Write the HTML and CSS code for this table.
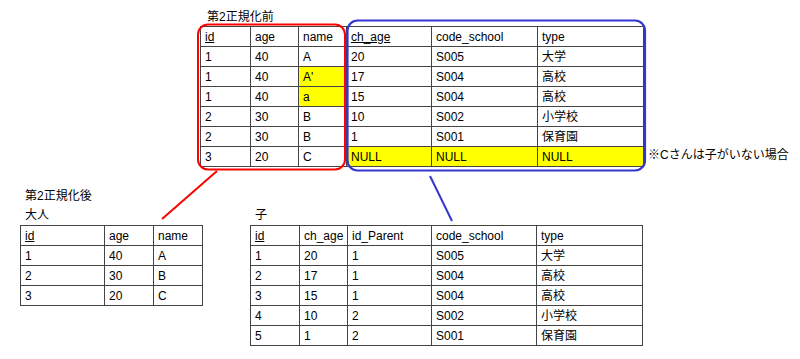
FILE: index.html
```html
<!DOCTYPE html>
<html lang="ja">
<head>
<meta charset="utf-8">
<title>第2正規化</title>
<link rel="stylesheet" href="styles.css">
</head>
<body>
<div class="page">
  <section class="before">
    <div class="caption">第2正規化前</div>
    <div class="before-row">
      <table class="t">
        <colgroup>
          <col class="c50"><col class="c48"><col class="c48"><col class="c85"><col class="c106"><col class="c106">
        </colgroup>
        <tr><td><u>id</u></td><td>age</td><td>name</td><td><u>ch_age</u></td><td>code_school</td><td>type</td></tr>
        <tr><td>1</td><td>40</td><td>A</td><td>20</td><td>S005</td><td>大学</td></tr>
        <tr><td>1</td><td>40</td><td class="hl">A'</td><td>17</td><td>S004</td><td>高校</td></tr>
        <tr><td>1</td><td>40</td><td class="hl">a</td><td>15</td><td>S004</td><td>高校</td></tr>
        <tr><td>2</td><td>30</td><td>B</td><td>10</td><td>S002</td><td>小学校</td></tr>
        <tr><td>2</td><td>30</td><td>B</td><td>1</td><td>S001</td><td>保育園</td></tr>
        <tr><td>3</td><td>20</td><td>C</td><td class="hl">NULL</td><td class="hl">NULL</td><td class="hl">NULL</td></tr>
      </table>
      <p class="note">※Cさんは子がいない場合</p>
    </div>
  </section>

  <section class="after">
    <div class="cap cap-left">
      <div class="cap-line">第2正規化後</div>
      <div class="cap-line">大人</div>
    </div>
    <div class="cap cap-right">
      <div class="cap-line">子</div>
    </div>
    <table class="t">
      <colgroup><col class="c84"><col class="c49"><col class="c49"></colgroup>
      <tr><td><u>id</u></td><td>age</td><td>name</td></tr>
      <tr><td>1</td><td>40</td><td>A</td></tr>
      <tr><td>2</td><td>30</td><td>B</td></tr>
      <tr><td>3</td><td>20</td><td>C</td></tr>
    </table>
    <table class="t">
      <colgroup><col class="c49"><col class="c48"><col class="c84"><col class="c105"><col class="c106"></colgroup>
      <tr><td><u>id</u></td><td>ch_age</td><td>id_Parent</td><td>code_school</td><td>type</td></tr>
      <tr><td>1</td><td>20</td><td>1</td><td>S005</td><td>大学</td></tr>
      <tr><td>2</td><td>17</td><td>1</td><td>S004</td><td>高校</td></tr>
      <tr><td>3</td><td>15</td><td>1</td><td>S004</td><td>高校</td></tr>
      <tr><td>4</td><td>10</td><td>2</td><td>S002</td><td>小学校</td></tr>
      <tr><td>5</td><td>1</td><td>2</td><td>S001</td><td>保育園</td></tr>
    </table>
  </section>

  <svg class="overlay" width="800" height="359" viewBox="0 0 800 359" aria-hidden="true">
    <rect x="198" y="24.5" width="147" height="145" rx="10" ry="10" fill="none" stroke="#ff0000" stroke-width="2"/>
    <rect x="347.5" y="20.5" width="297.5" height="150" rx="10" ry="10" fill="none" stroke="#3535d0" stroke-width="2.2"/>
    <line x1="217" y1="171" x2="162" y2="219" stroke="#ff0000" stroke-width="2"/>
    <line x1="430" y1="176" x2="452" y2="221" stroke="#3535d0" stroke-width="2"/>
  </svg>
</div>
</body>
</html>
```

FILE: styles.css
```css
html, body {
  margin: 0;
  padding: 0;
  background: #ffffff;
}

.page {
  position: relative;
  width: 800px;
  height: 359px;
  overflow: hidden;
  font-family: "Liberation Sans", Arial, "Noto Sans CJK JP", sans-serif;
  font-size: 12px;
  color: #000000;
}

.before {
  padding-left: 200px;
  padding-top: 9px;
}

.caption {
  height: 17px;
  line-height: 16px;
  padding-left: 7px;
}

.before-row {
  display: flex;
  align-items: flex-end;
}

.note {
  margin: 0 0 2px 4px;
  height: 20px;
  line-height: 20px;
  white-space: nowrap;
}

.t {
  border-collapse: collapse;
  table-layout: fixed;
  justify-self: start;
}

.t td {
  border: 1px solid #444444;
  height: 19px;
  padding: 0 0 0 4px;
  line-height: 18px;
  white-space: nowrap;
  overflow: hidden;
}

.t .hl {
  background: #ffff00;
}

.c48 { width: 48px; }
.c49 { width: 49px; }
.c50 { width: 50px; }
.c84 { width: 84px; }
.c85 { width: 85px; }
.c105 { width: 105px; }
.c106 { width: 106px; }

.after {
  display: grid;
  grid-template-columns: 230px auto;
  grid-template-rows: auto auto;
  align-items: start;
  justify-items: start;
  padding-left: 20px;
  margin-top: 20px;
}

.cap {
  align-self: end;
  padding-left: 5px;
}

.cap-line {
  height: 19px;
  line-height: 19px;
}

.overlay {
  position: absolute;
  left: 0;
  top: 0;
  pointer-events: none;
}
```
